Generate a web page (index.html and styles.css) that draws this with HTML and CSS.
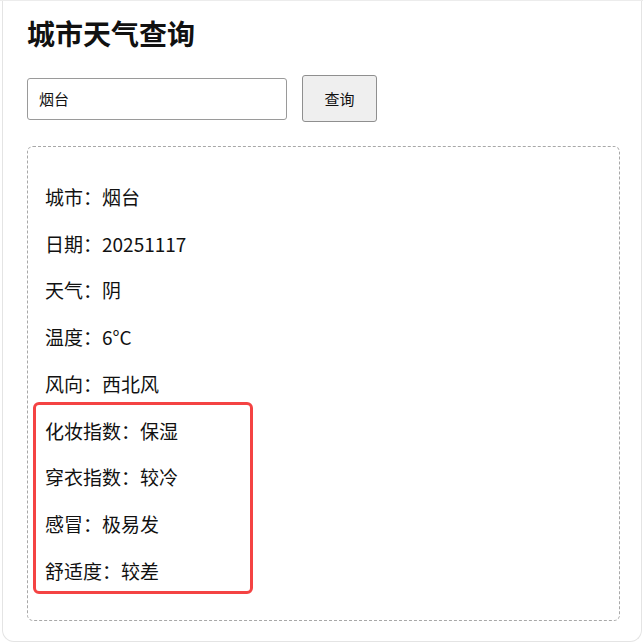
FILE: index.html
```html
<!DOCTYPE html>
<html lang="zh-CN">
<head>
  <meta charset="UTF-8">
  <meta name="viewport" content="width=device-width, initial-scale=1.0">
  <title>城市天气查询</title>
  <link rel="stylesheet" href="styles.css">
</head>
<body>
  <!-- Weather card -->
  <div class="card">
    <h2 class="title">城市天气查询</h2>
    <div class="search-row">
      <input type="text" class="city-input" value="烟台">
      <button class="search-button">查询</button>
    </div>

    <div class="result">
      <p>城市：烟台</p>
      <p>日期：20251117</p>
      <p>天气：阴</p>
      <p>温度：6°C</p>
      <p>风向：西北风</p>
      <p>化妆指数：保湿</p>
      <p>穿衣指数：较冷</p>
      <p>感冒：极易发</p>
      <p>舒适度：较差</p>
      <!-- highlight frame over the index rows -->
      <div class="highlight"></div>
    </div>
  </div>
</body>
</html>
```

FILE: styles.css
```css
body {
  font-family: "Noto Sans CJK SC", "Noto Sans", sans-serif;
  margin: 0;
  padding: 0;
  background: #fff;
  color: #111;
  border-top: 1px solid #ececec;
}

/* Card */
.card {
  margin: 0 1px 2px 2px;
  padding: 12px 21px 19px 24px;
  border: 1px solid #e4e4e4;
  border-top: none;
  border-radius: 0 0 12px 12px;
  height: 641px;
  box-sizing: border-box;
}

.title {
  font-size: 28px;
  font-weight: 700;
  margin: 0 0 22px 0;
  line-height: 40px;
}

/* Search row */
.search-row {
  display: flex;
  align-items: center;
  gap: 15px;
  margin-bottom: 24px;
}

.city-input {
  width: 260px;
  height: 42px;
  box-sizing: border-box;
  padding: 0 11px;
  border: 1px solid #9a9a9a;
  border-radius: 3px;
  font-family: inherit;
  font-size: 15px;
  color: #111;
}

.search-button {
  width: 75px;
  height: 47px;
  background: #efefef;
  border: 1px solid #8f8f8f;
  border-radius: 3px;
  font-family: inherit;
  font-size: 15px;
  color: #111;
}

/* Result box */
.result {
  position: relative;
  border: 1px dashed #a8a8a8;
  border-radius: 6px;
  padding: 18px 17px 17px 17px;
}

.result p {
  font-size: 19px;
  line-height: 28.7px;
  margin: 18px 0;
}

.highlight {
  position: absolute;
  left: 5px;
  top: 255px;
  width: 220px;
  height: 192px;
  box-sizing: border-box;
  border: 3px solid #f44343;
  border-radius: 6px;
}
```
